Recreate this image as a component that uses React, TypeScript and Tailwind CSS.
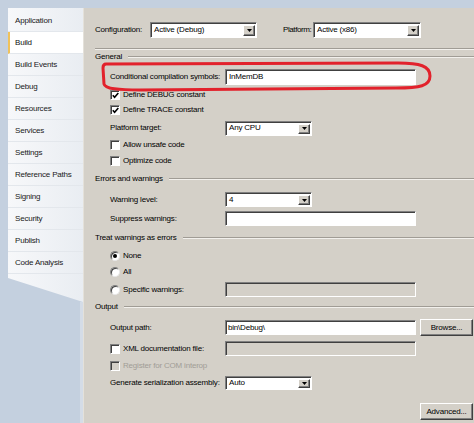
import React from 'react';

const sunkenBase =
  'box-border border border-t-[#808080] border-l-[#808080] border-b-white border-r-white shadow-[inset_1px_1px_0_#404040]';
const raisedBase =
  'box-border bg-[#d4d0c8] border border-t-white border-l-white border-b-[#404040] border-r-[#404040] shadow-[inset_-1px_-1px_0_#808080]';

function Sunken({ className = '', disabled = false, children }: { className?: string; disabled?: boolean; children?: React.ReactNode }) {
  return (
    <div className={`flex items-center ${sunkenBase} ${disabled ? 'bg-[#d4d0c8]' : 'bg-white'} ${className}`}>{children}</div>
  );
}

function Select({ className, value }: { className: string; value: string }) {
  return (
    <Sunken className={className}>
      <span className="flex-1 pl-[3px] whitespace-nowrap overflow-hidden">{value}</span>
      <div className={`w-[12px] h-[calc(100%-3px)] mr-[1px] mt-[1px] flex items-center justify-center ${raisedBase}`}>
        <svg width="5" height="3" viewBox="0 0 5 3">
          <path d="M0 0h5L2.5 3z" fill="#000" />
        </svg>
      </div>
    </Sunken>
  );
}

function Check({ checked = false, disabled = false }: { checked?: boolean; disabled?: boolean }) {
  return (
    <div
      className={`w-[10px] h-[10px] flex items-center justify-center ${sunkenBase} ${disabled ? 'bg-[#d4d0c8]' : 'bg-white'}`}
    >
      {checked && (
        <svg width="7" height="7" viewBox="0 0 7 7">
          <path d="M0.8 3.2 L2.6 5.2 L6.3 1" stroke="#000" strokeWidth="1.6" fill="none" />
        </svg>
      )}
    </div>
  );
}

function Radio({ on = false }: { on?: boolean }) {
  return (
    <div className="w-[10px] h-[10px] rounded-full bg-white box-border border border-t-[#808080] border-l-[#808080] border-b-[#e8e8e8] border-r-[#e8e8e8] shadow-[inset_1px_1px_0_#404040] flex items-center justify-center">
      {on && <div className="w-[4px] h-[4px] rounded-full bg-black" />}
    </div>
  );
}

function Header({ label, className }: { label: string; className: string }) {
  return (
    <div className={`flex items-center h-[12px] ${className}`}>
      <span className="whitespace-nowrap">{label}</span>
      <div className="flex-1 ml-[6px] h-[2px] box-border border-t border-t-[#a09c95] border-b border-b-[#f2f0ec]" />
    </div>
  );
}

const navItems = [
  'Application',
  'Build',
  'Build Events',
  'Debug',
  'Resources',
  'Services',
  'Settings',
  'Reference Paths',
  'Signing',
  'Security',
  'Publish',
  'Code Analysis',
];

export default function App() {
  return (
    <div className="relative w-[474px] h-[423px] overflow-hidden bg-[#c4d0df] pt-[8px] font-['Liberation_Sans',Arial,sans-serif] text-[8px] tracking-[-0.2px] text-black">
      <div className="flex h-[415px]">
        {/* left column */}
        <div className="w-[83px] pl-[8px] flex flex-col">
          <div className="flex flex-col pt-[2px] bg-gradient-to-r from-[#f7f8fa] to-[#e9edf2]">
            {navItems.map((item) =>
              item === 'Build' ? (
                <div
                  key={item}
                  className="h-[22px] flex items-center pl-[5px] bg-white border-l-2 border-l-[#f0c25a] border-b border-b-[#e3e7ec] box-border text-[#111]"
                >
                  {item}
                </div>
              ) : (
                <div
                  key={item}
                  className="h-[22px] flex items-center pl-[7px] border-b border-b-[#e3e7ec] box-border text-[#1a1a1a]"
                >
                  {item}
                </div>
              )
            )}
          </div>
          <div className="h-[28px] bg-gradient-to-r from-[#f7f8fa] to-[#e9edf2] [clip-path:polygon(0_0,100%_0,100%_100%,0_14%)]" />
          <div className="flex-1 border-r-[3px] border-r-[#d4dce7]" />
        </div>

        {/* main panel */}
        <div className="flex-1 bg-[#d4d0c8] border-l border-l-[#e4e1da] box-border pl-[11px] pt-[14px] flex flex-col">
          {/* config row */}
          <div className="flex items-center h-[16px]">
            <span className="w-[55px] whitespace-nowrap">Configuration:</span>
            <Select className="w-[107px] h-[16px]" value="Active (Debug)" />
            <span className="w-[26px]" />
            <span className="w-[30px] whitespace-nowrap tracking-[-0.4px]">Platform:</span>
            <Select className="w-[108px] h-[16px]" value="Active (x86)" />
          </div>
          <div className="mt-[10px] h-[2px] box-border border-t border-t-[#a09c95] border-b border-b-[#f2f0ec]" />

          <Header label="General" className="mt-[1px]" />
          <div className="flex items-center h-[16px] mt-[6px] pl-[15px]">
            <span className="w-[115px] whitespace-nowrap">Conditional compilation symbols:</span>
            <Sunken className="w-[191px] h-[16px]">
              <span className="pl-[3px]">InMemDB</span>
            </Sunken>
          </div>
          <div className="flex items-center h-[14px] mt-[3px] pl-[15px]">
            <Check checked />
            <span className="ml-[3px]">Define DEBUG constant</span>
          </div>
          <div className="flex items-center h-[14px] mt-[1px] pl-[15px]">
            <Check checked />
            <span className="ml-[3px]">Define TRACE constant</span>
          </div>
          <div className="flex items-center h-[16px] mt-[3px] pl-[15px]">
            <span className="w-[115px] whitespace-nowrap">Platform target:</span>
            <Select className="w-[87px] h-[15px]" value="Any CPU" />
          </div>
          <div className="flex items-center h-[14px] mt-[2px] pl-[15px]">
            <Check />
            <span className="ml-[3px]">Allow unsafe code</span>
          </div>
          <div className="flex items-center h-[14px] mt-[2px] pl-[15px]">
            <Check />
            <span className="ml-[3px]">Optimize code</span>
          </div>

          <Header label="Errors and warnings" className="mt-[5px]" />
          <div className="flex items-center h-[15px] mt-[7px] pl-[15px]">
            <span className="w-[115px] whitespace-nowrap">Warning level:</span>
            <Select className="w-[87px] h-[15px]" value="4" />
          </div>
          <div className="flex items-center h-[15px] mt-[4px] pl-[15px]">
            <span className="w-[115px] whitespace-nowrap">Suppress warnings:</span>
            <Sunken className="w-[191px] h-[15px]" />
          </div>

          <Header label="Treat warnings as errors" className="mt-[6px]" />
          <div className="flex items-center h-[14px] mt-[5px] pl-[15px]">
            <Radio on />
            <span className="ml-[3px]">None</span>
          </div>
          <div className="flex items-center h-[14px] mt-[2px] pl-[15px]">
            <Radio />
            <span className="ml-[3px]">All</span>
          </div>
          <div className="flex items-center h-[15px] mt-[3px] pl-[15px]">
            <div className="w-[115px] flex items-center">
              <Radio />
              <span className="ml-[3px] whitespace-nowrap">Specific warnings:</span>
            </div>
            <Sunken disabled className="w-[191px] h-[15px]" />
          </div>

          <Header label="Output" className="mt-[4px]" />
          <div className="flex items-center h-[17px] mt-[6px] pl-[15px]">
            <span className="w-[115px] whitespace-nowrap">Output path:</span>
            <Sunken className="w-[191px] h-[15px]">
              <span className="pl-[2px]">bin\Debug\</span>
            </Sunken>
            <div className={`w-[53px] h-[17px] ml-[4px] flex items-center justify-center ${raisedBase}`}>Browse...</div>
          </div>
          <div className="flex items-center h-[15px] mt-[5px] pl-[15px]">
            <div className="w-[115px] flex items-center">
              <Check />
              <span className="ml-[3px] whitespace-nowrap">XML documentation file:</span>
            </div>
            <Sunken disabled className="w-[191px] h-[15px]" />
          </div>
          <div className="flex items-center h-[14px] mt-[3px] pl-[15px]">
            <Check disabled />
            <span className="ml-[3px] text-[#a19d96]">Register for COM interop</span>
          </div>
          <div className="flex items-center h-[14px] mt-[3px] pl-[15px]">
            <span className="w-[115px] whitespace-nowrap">Generate serialization assembly:</span>
            <Select className="w-[87px] h-[14px]" value="Auto" />
          </div>
          <div className="flex items-center justify-end h-[17px] mt-[13px] pr-[1px]">
            <div className={`w-[53px] h-[17px] flex items-center justify-center ${raisedBase}`}>Advanced...</div>
          </div>
        </div>
      </div>

      {/* red highlight drawn over the form */}
      <svg className="absolute left-0 top-0 pointer-events-none" width="474" height="423" viewBox="0 0 474 423">
        <path
          d="M106 64 L398 63 C420 63 430 66 430 76 C430 86 420 88 396 88 L140 90 C118 90 105 89 104 84 L103 68 C103 65 104 64 106 64 Z"
          fill="none"
          stroke="#e2222c"
          strokeWidth="3"
        />
      </svg>
    </div>
  );
}
